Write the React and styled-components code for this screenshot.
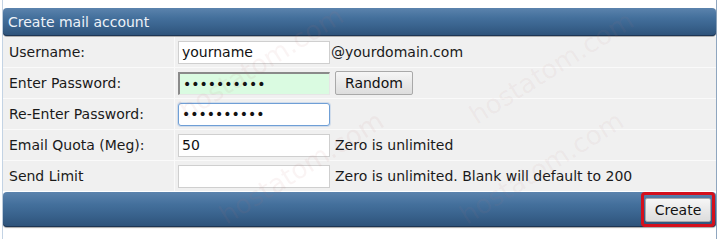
import React from 'react'
import styled, { createGlobalStyle } from 'styled-components'

const GlobalStyle = createGlobalStyle`
  html, body {
    margin: 0;
    padding: 0;
    background: #fff;
  }

  body {
    font-family: 'DejaVu Sans', Verdana, sans-serif;
    font-size: 14px;
    color: #1a1a1a;
  }
`

const Page = styled.div`
  position: relative;
  width: 720px;
  height: 240px;
  overflow: hidden;
  background: #fff;
`

const Panel = styled.div`
  width: 713px;
  margin-left: 2px;
  padding-top: 8px;
  border-left: 1px solid #c3d3e4;
  border-right: 1px solid #8fa6bf;
  display: flex;
  flex-direction: column;
  gap: 1px;
  padding-bottom: 12px;
`

const Bar = styled.div`
  display: flex;
  align-items: center;
  justify-content: ${(p) => (p.$end ? 'flex-end' : 'flex-start')};
  height: ${(p) => p.$height}px;
  padding: 0 5px;
  border-radius: 4px;
  background: linear-gradient(
    to bottom,
    #5b83ad 0%,
    #44709c 35%,
    #3b6590 60%,
    #2d5279 100%
  );
  box-shadow: inset 0 -1px 0 #1d3553, 0 1px 1px rgba(0, 0, 0, 0.35);
  color: #edf2f8;
  font-size: 14px;
`

const Table = styled.div`
  display: flex;
  flex-direction: column;
  gap: 1px;
  background: #fafafa;
`

const Row = styled.div`
  display: grid;
  grid-template-columns: 171px 1fr;
  gap: 1px;
  height: 30px;
`

const Label = styled.div`
  display: flex;
  align-items: center;
  padding-left: 6px;
  background: #f0f0f0;
`

const Value = styled.div`
  display: flex;
  align-items: center;
  padding-left: 3px;
  background: #f0f0f0;
`

const Input = styled.input`
  box-sizing: border-box;
  width: 152px;
  height: 23px;
  margin: 0;
  padding: 0 3px;
  font-family: 'DejaVu Sans', Verdana, sans-serif;
  font-size: 14px;
  color: #111;
  outline: none;
  background: ${(p) => (p.$filled ? '#dafbe1' : '#fff')};
  border: 1px solid #cfcfcf;
  border-radius: ${(p) => (p.$focused ? '3px' : '0')};
  ${(p) =>
    p.$filled &&
    `
    border-top: 2px solid #8a8a8a;
    border-left: 2px solid #8a8a8a;
    border-right-color: #e6e6e6;
    border-bottom-color: #e6e6e6;
  `}
  ${(p) =>
    p.$focused &&
    `
    border: 1px solid #6f9fd6;
    box-shadow: 0 0 0 1px rgba(120, 165, 220, 0.25);
  `}
`

const Hint = styled.span`
  margin-left: ${(p) => p.$gap}px;
  white-space: nowrap;
`

const Button = styled.button`
  box-sizing: border-box;
  height: 24px;
  margin-left: ${(p) => p.$gap || 0}px;
  padding: 0 9px;
  font-family: 'DejaVu Sans', Verdana, sans-serif;
  font-size: 14px;
  color: #111;
  background: linear-gradient(to bottom, #f6f6f6 0%, #e9e9e9 50%, #dddddd 100%);
  border: 1px solid #a9a9a9;
  border-radius: 2px;
  cursor: pointer;
`

const Highlight = styled.div`
  display: flex;
  align-items: center;
  justify-content: center;
  box-sizing: border-box;
  width: 74px;
  height: 35px;
  margin-right: -4px;
  border: 3px solid #d4101c;
  border-radius: 4px;
`

const Watermark = styled.span`
  position: absolute;
  left: ${(p) => p.$x}px;
  top: ${(p) => p.$y}px;
  font-family: 'DejaVu Sans', Verdana, sans-serif;
  font-size: 26px;
  color: rgba(190, 120, 120, 0.08);
  transform: rotate(-32deg);
  transform-origin: left bottom;
  white-space: nowrap;
  pointer-events: none;
`

const marks = [
  [190, 95],
  [480, 100],
  [230, 200],
  [470, 200],
]

const fields = [
  { label: 'Username:', value: 'yourname', hint: '@yourdomain.com', gap: 1 },
  { label: 'Enter Password:', value: 'password12', type: 'password', filled: true, button: 'Random' },
  { label: 'Re-Enter Password:', value: 'password12', type: 'password', focused: true },
  { label: 'Email Quota (Meg):', value: '50', hint: 'Zero is unlimited', gap: 5 },
  { label: 'Send Limit', value: '', hint: 'Zero is unlimited. Blank will default to 200', gap: 5 },
]

const App = () => {
  return (
    <Page>
      <GlobalStyle />
      <Panel>
        <Bar $height={28}>Create mail account</Bar>
        <Table>
          {fields.map((f) => (
            <Row key={f.label}>
              <Label>{f.label}</Label>
              <Value>
                <Input
                  type={f.type || 'text'}
                  defaultValue={f.value}
                  $filled={f.filled}
                  $focused={f.focused}
                  autoFocus={f.focused}
                />
                {f.hint && <Hint $gap={f.gap}>{f.hint}</Hint>}
                {f.button && <Button $gap={5}>{f.button}</Button>}
              </Value>
            </Row>
          ))}
        </Table>
        <Bar $height={35} $end>
          <Highlight>
            <Button>Create</Button>
          </Highlight>
        </Bar>
      </Panel>
      {marks.map(([x, y]) => (
        <Watermark key={x + '-' + y} $x={x} $y={y}>
          hostatom.com
        </Watermark>
      ))}
    </Page>
  )
}

export default App
